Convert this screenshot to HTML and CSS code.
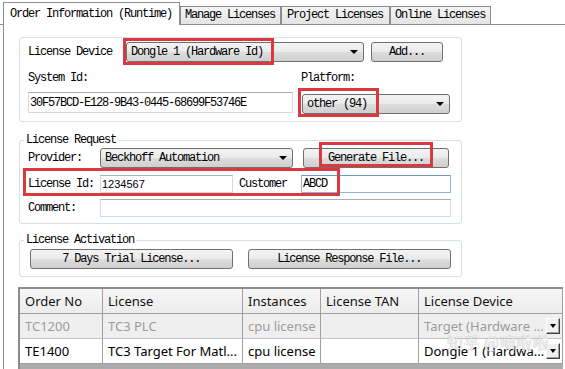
FILE: index.html
```html
<!DOCTYPE html>
<html>
<head>
<meta charset="utf-8">
<title>License</title>
<link rel="stylesheet" href="styles.css">
</head>
<body>
<div class="tabstrip">
  <div class="tab active">Order Information (Runtime)</div>
  <div class="tab">Manage Licenses</div>
  <div class="tab project-tab">Project Licenses</div>
  <div class="tab">Online Licenses</div>
</div>
<div class="panel">
  <div class="group device-group">
    <div class="row device-row">
      <span class="label device-label">License Device</span>
      <div class="combo device-combo"><span>Dongle 1 (Hardware Id)</span><i class="arrow"></i></div>
      <div class="button add-button">Add...</div>
    </div>
    <div class="cols">
      <div class="col sys-col">
        <span class="label">System Id:</span>
        <div class="textbox sys-box">30F57BCD-E128-9B43-0445-68699F53746E</div>
      </div>
      <div class="col plat-col">
        <span class="label">Platform:</span>
        <div class="combo plat-combo"><span>other (94)</span><i class="arrow"></i></div>
      </div>
    </div>
  </div>
  <fieldset class="group request-group">
    <legend>License Request</legend>
    <div class="row provider-row">
      <span class="label field-label">Provider:</span>
      <div class="combo provider-combo"><span>Beckhoff Automation</span><i class="arrow"></i></div>
      <div class="button generate-button">Generate File...</div>
    </div>
    <div class="row id-row">
      <span class="label field-label">License Id:</span>
      <div class="textbox id-box"><span class="sans">1234567</span></div>
      <span class="label customer-label">Customer</span>
      <div class="textbox customer-box">ABCD</div>
    </div>
    <div class="row comment-row">
      <span class="label field-label">Comment:</span>
      <div class="textbox comment-box"></div>
    </div>
  </fieldset>
  <fieldset class="group activation-group">
    <legend>License Activation</legend>
    <div class="row activation-row">
      <div class="button trial-button">7 Days Trial License...</div>
      <div class="button response-button">License Response File...</div>
    </div>
  </fieldset>
  <div class="grid">
    <div class="cell head">Order No</div>
    <div class="cell head">License</div>
    <div class="cell head">Instances</div>
    <div class="cell head">License TAN</div>
    <div class="cell head">License Device</div>

    <div class="cell disabled">TC1200</div>
    <div class="cell disabled">TC3 PLC</div>
    <div class="cell disabled">cpu license</div>
    <div class="cell disabled"></div>
    <div class="cell disabled device-cell"><span>Target (Hardware ...</span><i class="drop"></i></div>

    <div class="cell normal">TE1400</div>
    <div class="cell normal">TC3 Target For Matl...</div>
    <div class="cell normal">cpu license</div>
    <div class="cell normal"></div>
    <div class="cell normal device-cell"><span>Dongle 1 (Hardwa...</span><i class="drop"></i></div>
  </div>
</div>
<div class="mark mark-device"></div>
<div class="mark mark-platform"></div>
<div class="mark mark-generate"></div>
<div class="mark mark-license"></div>
<div class="watermark">知乎 @嘀啦啦</div>
</body>
</html>
```
FILE: styles.css
```css
* { box-sizing: border-box; }
html, body { margin: 0; padding: 0; }
body {
  width: 565px;
  height: 369px;
  overflow: hidden;
  position: relative;
  background: #fff;
  color: #000;
  font-family: "Liberation Mono", monospace;
  font-size: 12px;
  line-height: 14px;
  letter-spacing: -1.2px;
}

/* tabs */
.tabstrip {
  display: flex;
  align-items: flex-end;
  height: 25px;
  padding: 2px 0 0 3px;
  border-bottom: 1px solid #898c95;
}
.tab {
  height: 18px;
  padding: 0 5px 0 4px;
  border: 1px solid #898c95;
  border-bottom: none;
  background: linear-gradient(#f4f4f4, #e4e4e4);
  line-height: 17px;
  white-space: nowrap;
}
.project-tab { padding: 0 6px 0 5px; }
.tab.active {
  height: 23px;
  margin-bottom: -1px;
  padding: 0 7px 0 6px;
  background: #fff;
  line-height: 23px;
}

/* panel */
.panel {
  margin-left: 3px;
  height: 344px;
  border-left: 1px solid #898c95;
  padding: 12px 0 0 15px;
}

.group {
  width: 443px;
  border: 1px solid #d5dfe5;
  border-radius: 3px;
  margin: 0;
  min-width: 0;
}
.device-group { padding: 4px 10px 7px 8px; }

.row { display: flex; align-items: center; }
.label { white-space: nowrap; }

.device-label { width: 98px; }
.device-combo { width: 238px; height: 20px; }
.add-button { width: 72px; height: 20px; margin-left: 7px; }

.cols { display: flex; margin-top: 9px; }
.col { display: flex; flex-direction: column; }
.sys-col { width: 265px; }
.plat-col { width: 149px; margin-left: 8px; }
.sys-box { height: 21px; margin-top: 7px; }
.plat-combo { height: 20px; margin-top: 9px; margin-left: 1px; width: 148px; }

/* controls */
.combo, .button {
  border: 1px solid #707070;
  border-radius: 3px;
  background: linear-gradient(#f3f3f3 0%, #ebebeb 48%, #dddddd 52%, #cfcfcf 100%);
  white-space: nowrap;
}
.combo {
  display: flex;
  align-items: center;
  justify-content: space-between;
  padding: 0 5px 0 4px;
}
.button {
  display: flex;
  align-items: center;
  justify-content: center;
}
.arrow {
  width: 0;
  height: 0;
  border-left: 4px solid transparent;
  border-right: 4px solid transparent;
  border-top: 4px solid #000;
}
.textbox {
  display: flex;
  align-items: center;
  background: #fff;
  border: 1px solid #d6d9de;
  border-top-color: #abadb3;
  padding-left: 1px;
  white-space: nowrap;
}
.sans {
  font-family: "Liberation Sans", sans-serif;
  font-size: 11px;
  letter-spacing: 0;
}

/* fieldsets */
fieldset.group { padding: 1px 10px 6px 8px; margin-top: 11px; }
legend {
  padding: 0 2px;
  margin-left: -4px;
  line-height: 14px;
}
.field-label { width: 72px; }
.provider-combo { width: 193px; height: 20px; }
.generate-button { width: 146px; height: 20px; margin-left: 10px; }
.id-row { margin-top: 7px; }
.id-box { width: 133px; height: 18px; }
.customer-label { width: 62px; margin-left: 6px; }
.customer-box { width: 150px; height: 18px; border-color: #8fb6dc; border-top-color: #6a9ccc; }
.comment-row { margin-top: 6px; }
.comment-box { width: 351px; height: 18px; }

fieldset.activation-group { margin-top: 9px; padding: 2px 10px 7px 8px; }
.activation-row { margin-left: 2px; }
.trial-button { width: 203px; height: 20px; }
.response-button { width: 204px; height: 20px; margin-left: 15px; }

/* grid */
.grid {
  margin-top: 10px;
  margin-left: -1px;
  width: 545px;
  height: 90px;
  background: #ababab;
  border-top: 2px solid #8c8c8c;
  border-left: 2px solid #8c8c8c;
  display: grid;
  grid-template-columns: 83px 140px 78px 98px 144px;
  grid-auto-rows: 25px;
  align-content: start;
  font-family: "Noto Sans", sans-serif;
  font-size: 13px;
  line-height: 16px;
  letter-spacing: 0;
}
.cell {
  display: flex;
  align-items: center;
  padding-left: 5px;
  border-right: 1px solid #a0a0a0;
  border-bottom: 1px solid #a0a0a0;
  white-space: nowrap;
  overflow: hidden;
}
.head { background: linear-gradient(#f6f6f6, #ececec); color: #111; }
.disabled { background: #efefef; color: #9c9c9c; border-bottom-color: #c4c4c4; }
.normal { background: #fff; color: #000; }
.device-cell { justify-content: space-between; padding-right: 2px; }
.drop {
  width: 14px;
  height: 16px;
  background: #f0f0f0;
  border: 1px solid;
  border-color: #fff #404040 #404040 #fff;
  box-shadow: inset -1px -1px 0 #a0a0a0;
  display: flex;
  align-items: center;
  justify-content: center;
}
.drop::after {
  content: "";
  border-left: 3.5px solid transparent;
  border-right: 3.5px solid transparent;
  border-top: 4px solid #000;
}

/* red annotation boxes */
.mark { position: absolute; border: 3px solid #d9393f; }
.mark-device { left: 123px; top: 38px; width: 151px; height: 27px; }
.mark-platform { left: 298px; top: 88px; width: 81px; height: 29px; }
.mark-generate { left: 319px; top: 142px; width: 114px; height: 25px; }
.mark-license { left: 23px; top: 168px; width: 317px; height: 28px; }

.watermark {
  position: absolute;
  left: 447px;
  top: 334px;
  font-family: "Noto Sans CJK SC", "Noto Sans", sans-serif;
  font-size: 16px;
  line-height: 16px;
  letter-spacing: 0.5px;
  color: rgba(255, 255, 255, 0.85);
  text-shadow: 0 0 1px rgba(0, 0, 0, 0.4);
  white-space: nowrap;
}
```
